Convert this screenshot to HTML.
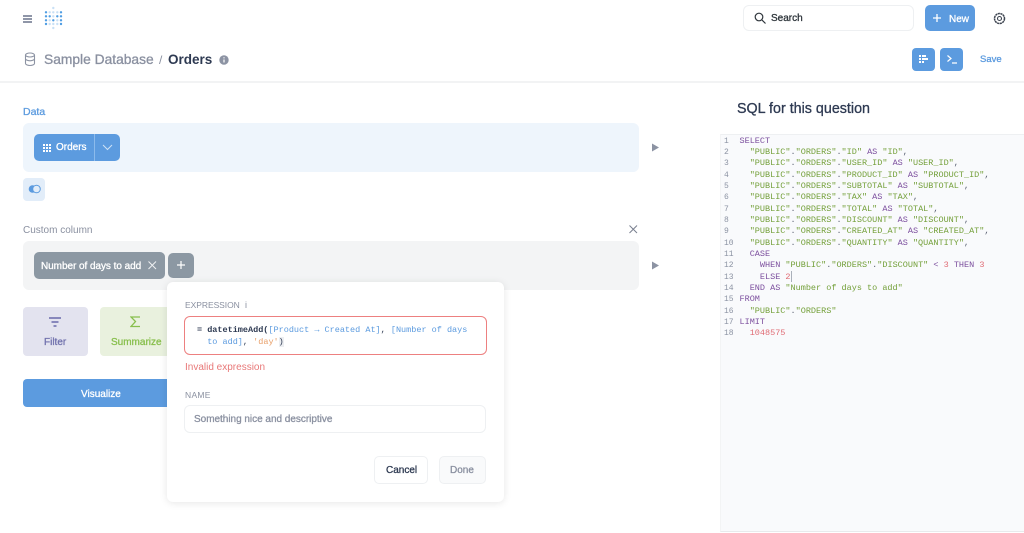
<!DOCTYPE html>
<html><head><meta charset="utf-8"><style>
html,body{margin:0;padding:0;background:#fff}
#p{position:relative;width:1024px;height:533px;overflow:hidden;background:#fff;font-family:"Liberation Sans",sans-serif;-webkit-text-stroke:.3px}
#p div,#p svg{position:absolute}
#p svg{-webkit-text-stroke:0}
.t{white-space:nowrap;line-height:14px;font-size:10px}
.l{-webkit-text-stroke:0}
.sql{font:8.5px/11.35px "Liberation Mono",monospace;white-space:pre;color:#74a03a;-webkit-text-stroke:0}
.k{color:#7c4f9e}.n{color:#e06c75}.o{color:#555c6e}
</style></head><body><div id="p">
<svg style="left:23px;top:15px" width="10" height="8"><path d="M0 1h9M0 4h9M0 7h9" stroke="#4c5773" stroke-width="1.2"/></svg>
<svg style="left:44px;top:5px" width="20" height="26"><g fill="#c9e0f5"><circle cx="9.300" cy="3" r="1.200"/><circle cx="5.700" cy="7.300" r="1.200"/><circle cx="9.300" cy="7.300" r="1.200"/><circle cx="13.300" cy="7.300" r="1.200"/><circle cx="9.300" cy="11.300" r="1.200"/><circle cx="5.700" cy="15.300" r="1.200"/><circle cx="13.300" cy="15.300" r="1.200"/><circle cx="5.700" cy="19" r="1.200"/><circle cx="9.300" cy="19" r="1.200"/><circle cx="13.300" cy="19" r="1.200"/><circle cx="9.300" cy="23" r="1.200"/></g><g fill="#509ee3"><circle cx="2" cy="7.300" r="1.200"/><circle cx="2" cy="11.300" r="1.200"/><circle cx="2" cy="15.300" r="1.200"/><circle cx="2" cy="19" r="1.200"/><circle cx="5.700" cy="11.300" r="1.200"/><circle cx="9.300" cy="15.300" r="1.200"/><circle cx="13.300" cy="11.300" r="1.200"/><circle cx="17" cy="7.300" r="1.200"/><circle cx="17" cy="11.300" r="1.200"/><circle cx="17" cy="15.300" r="1.200"/><circle cx="17" cy="19" r="1.200"/></g></svg>

<div style="left:743px;top:5px;width:169px;height:24px;border:1px solid #eef0f2;border-radius:6px"></div>
<svg style="left:754px;top:12px" width="13" height="13" fill="none" stroke="#2e353b" stroke-width="1.200"><circle cx="5" cy="5" r="3.800"/><path d="M8 8l3.500 3.500"/></svg>
<div class="t" style="left:771px;top:12px;color:#2e353b">Search</div>
<div style="left:925px;top:5px;width:50px;height:26px;background:#5c9bdf;border-radius:5px"></div>
<svg style="left:932px;top:13px" width="11" height="11"><path d="M5 1v8M1 5h8" stroke="#fff" stroke-width="1.300"/></svg>
<div class="t" style="left:949px;top:13px;color:#fff">New</div>
<svg style="left:993px;top:12px" width="13" height="13" fill="none" stroke="#3d4450" stroke-width="1.100"><circle cx="6.500" cy="6.500" r="2"/><circle cx="6.500" cy="6.500" r="5" stroke-width="1.500" stroke-dasharray="2.200 .5"/></svg>

<svg style="left:24px;top:52px" width="13" height="15" fill="none" stroke="#8c93a3" stroke-width="1.100"><ellipse cx="6" cy="3" rx="4.500" ry="2"/><path d="M1.500 3v8.500c0 1 2 2 4.500 2s4.500-1 4.500-2V3M1.500 6.800c0 1 2 2 4.500 2s4.500-1 4.500-2"/></svg>
<div class="t" style="left:44px;top:53px;font-size:13.800px;color:#8a90a0">Sample Database</div>
<div class="t l" style="left:159px;top:53px;font-size:12px;color:#8a90a0">/</div>
<div class="t l" style="left:168px;top:53px;font-size:13.500px;color:#2e3a52;font-weight:bold">Orders</div>
<svg style="left:219px;top:55px" width="10" height="10"><circle cx="5" cy="5" r="4.700" fill="#8c93a3"/><path d="M5 4.500v3M5 2.200v1.200" stroke="#fff" stroke-width="1.200"/></svg>

<div style="left:912px;top:48px;width:23px;height:23px;background:#5c9bdf;border-radius:4px"></div>
<svg style="left:919px;top:55px" width="10" height="9" fill="#fff"><rect x="0" y="0" width="2" height="2"/><rect x="3" y="0" width="4" height="2"/><rect x="0" y="3" width="2" height="2"/><rect x="3" y="3" width="6" height="2"/><rect x="0" y="6" width="2" height="2"/><rect x="3" y="6" width="2" height="2"/></svg>
<div style="left:940px;top:48px;width:23px;height:23px;background:#5c9bdf;border-radius:4px"></div>
<svg style="left:947px;top:55px" width="11" height="10" fill="none" stroke="#fff" stroke-width="1.200"><path d="M.5 .5l3.500 3-3.500 3M5 8h5"/></svg>
<div class="t" style="left:980px;top:53px;color:#5c9bdf;font-size:9.500px">Save</div>
<div style="left:0;top:81px;width:1024px;height:2px;background:#f2f3f4"></div>

<div class="t" style="left:23px;top:105px;font-size:10.500px;color:#5c9bdf">Data</div>
<div style="left:23px;top:123px;width:616px;height:49px;background:#eef5fc;border-radius:6px"></div>
<div style="left:34px;top:134px;width:86px;height:27px;background:#5c9bdf;border-radius:5px"></div>
<div style="left:94px;top:134px;width:1px;height:27px;background:#8cbbec"></div>
<svg style="left:43px;top:144px" width="8" height="8" fill="#fff"><rect x="0" y="0" width="2" height="2"/><rect x="3" y="0" width="2" height="2"/><rect x="6" y="0" width="2" height="2"/><rect x="0" y="3" width="2" height="2"/><rect x="3" y="3" width="2" height="2"/><rect x="6" y="3" width="2" height="2"/><rect x="0" y="6" width="2" height="2"/><rect x="3" y="6" width="2" height="2"/><rect x="6" y="6" width="2" height="2"/></svg>
<div class="t" style="left:56px;top:141px;color:#fff">Orders</div>
<svg style="left:102px;top:144px" width="11" height="7" fill="none" stroke="#cfe2f6" stroke-width="1"><path d="M1 1l4.500 4.500L10 1"/></svg>
<div style="left:23px;top:178px;width:22px;height:23px;background:#e2edf9;border-radius:4px"></div>
<svg style="left:28px;top:184px" width="13" height="10"><circle cx="4.500" cy="5" r="3.800" fill="#5c9bdf"/><circle cx="8.500" cy="5" r="3.800" fill="#e2edf9" stroke="#5c9bdf" stroke-width="1"/></svg>
<svg style="left:652px;top:143px" width="8" height="9"><path d="M0 .5l7 4-7 4z" fill="#8c93a3"/></svg>

<div class="t l" style="left:23px;top:224px;color:#8a90a0">Custom column</div>
<svg style="left:629px;top:225px" width="9" height="9" stroke="#7a8090" fill="none"><path d="M.5 .5l7.500 7.500M8 .5L.5 8"/></svg>
<div style="left:23px;top:241px;width:616px;height:49px;background:#f3f4f5;border-radius:6px"></div>
<div style="left:34px;top:252px;width:131px;height:27px;background:#8c98a3;border-radius:5px"></div>
<div class="t" style="left:41px;top:260px;color:#fff;letter-spacing:-.05px">Number of days to add</div>
<svg style="left:148px;top:261px" width="9" height="9" stroke="#eef0f2" fill="none"><path d="M.5 .5l7.500 7.500M8 .5L.5 8"/></svg>
<div style="left:168px;top:253px;width:26px;height:25px;background:#8c98a3;border-radius:5px"></div>
<svg style="left:176px;top:260px" width="11" height="11"><path d="M5 1v8M1 5h8" stroke="#fff" stroke-width="1.200"/></svg>
<svg style="left:652px;top:261px" width="8" height="9"><path d="M0 .5l7 4-7 4z" fill="#8c93a3"/></svg>

<div style="left:23px;top:307px;width:65px;height:49px;background:#e3e3ef;border-radius:4px"></div>
<svg style="left:48px;top:317px" width="14" height="11" stroke="#6a6bab" stroke-width="1.500"><path d="M1 1h12M3.500 5h7M5.500 9h3"/></svg>
<div class="t" style="left:44px;top:336px;color:#7172ad">Filter</div>
<div style="left:100px;top:307px;width:72px;height:49px;background:#e9f1de;border-radius:4px"></div>
<svg style="left:130px;top:316px" width="11" height="12" fill="none" stroke="#88bf4d" stroke-width="1.300"><path d="M10 1H1l4.500 4.500L1 10.500h9"/></svg>
<div class="t" style="left:111px;top:336px;color:#88bf4d">Summarize</div>
<div style="left:23px;top:379px;width:160px;height:28px;background:#5c9bdf;border-radius:4px"></div>
<div class="t" style="left:81px;top:388px;color:#fff">Visualize</div>

<div style="left:167px;top:282px;width:337px;height:220px;background:#fff;border-radius:6px;box-shadow:0 1px 8px rgba(0,0,0,.1)"></div>
<div class="t l" style="left:185px;top:298px;font-size:8.500px;color:#8a90a0;letter-spacing:-.05px">EXPRESSION</div>
<div class="t l" style="left:245px;top:298px;font-size:9px;color:#8a90a0">i</div>
<div style="left:184px;top:316px;width:301px;height:37px;border:1px solid #ed8080;border-radius:6px"></div>
<div class="sql" style="left:197px;top:324px;line-height:12px;color:#5c9bdf"><span style="color:#2e3a52;font-weight:bold">= datetimeAdd(</span>[Product → Created At]<span style="color:#2e3a52">,</span> [Number of days
  to add]<span style="color:#2e3a52">,</span> <span style="color:#e8a06a">'day'</span><span style="color:#2e3a52;background:#eceef1">)</span></div>
<div class="t l" style="left:185px;top:361px;color:#e87878">Invalid expression</div>
<div class="t l" style="left:185px;top:388px;font-size:8.500px;color:#8a90a0;letter-spacing:.3px">NAME</div>
<div style="left:184px;top:405px;width:300px;height:26px;border:1px solid #eef0f2;border-radius:6px"></div>
<div class="t" style="left:194px;top:413px;color:#8a90a0;letter-spacing:-.02px">Something nice and descriptive</div>
<div style="left:374px;top:456px;width:52px;height:26px;border:1px solid #eef0f2;border-radius:5px"></div>
<div class="t" style="left:386px;top:464px;color:#2e3a52">Cancel</div>
<div style="left:439px;top:456px;width:45px;height:26px;border:1px solid #eef0f2;border-radius:5px;background:#f9fafb"></div>
<div class="t" style="left:450px;top:464px;color:#8a90a0">Done</div>

<div class="t" style="left:737px;top:101px;font-size:14.300px;line-height:16px;color:#2e3a52;-webkit-text-stroke:.3px #2e3a52">SQL for this question</div>
<div style="left:720px;top:134px;width:304px;height:396px;background:#f9fafc;border-top:1px solid #eef0f2;border-left:1px solid #f3f4f5;border-bottom:1px solid #e8eaec"></div>
<div class="sql" style="left:724px;top:135.600px;color:#8c93a3;font-size:8px">1
2
3
4
5
6
7
8
9
10
11
12
13
14
15
16
17
18</div>
<div class="sql" style="left:739.500px;top:135.600px"><span class="k">SELECT</span>
  "PUBLIC"<span class="o">.</span>"ORDERS"<span class="o">.</span>"ID" <span class="k">AS</span> "ID"<span class="o">,</span>
  "PUBLIC"<span class="o">.</span>"ORDERS"<span class="o">.</span>"USER_ID" <span class="k">AS</span> "USER_ID"<span class="o">,</span>
  "PUBLIC"<span class="o">.</span>"ORDERS"<span class="o">.</span>"PRODUCT_ID" <span class="k">AS</span> "PRODUCT_ID"<span class="o">,</span>
  "PUBLIC"<span class="o">.</span>"ORDERS"<span class="o">.</span>"SUBTOTAL" <span class="k">AS</span> "SUBTOTAL"<span class="o">,</span>
  "PUBLIC"<span class="o">.</span>"ORDERS"<span class="o">.</span>"TAX" <span class="k">AS</span> "TAX"<span class="o">,</span>
  "PUBLIC"<span class="o">.</span>"ORDERS"<span class="o">.</span>"TOTAL" <span class="k">AS</span> "TOTAL"<span class="o">,</span>
  "PUBLIC"<span class="o">.</span>"ORDERS"<span class="o">.</span>"DISCOUNT" <span class="k">AS</span> "DISCOUNT"<span class="o">,</span>
  "PUBLIC"<span class="o">.</span>"ORDERS"<span class="o">.</span>"CREATED_AT" <span class="k">AS</span> "CREATED_AT"<span class="o">,</span>
  "PUBLIC"<span class="o">.</span>"ORDERS"<span class="o">.</span>"QUANTITY" <span class="k">AS</span> "QUANTITY"<span class="o">,</span>
  <span class="k">CASE</span>
    <span class="k">WHEN</span> "PUBLIC"<span class="o">.</span>"ORDERS"<span class="o">.</span>"DISCOUNT" <span class="k">&lt;</span> <span class="n">3</span> <span class="k">THEN</span> <span class="n">3</span>
    <span class="k">ELSE</span> <span class="n">2</span>
  <span class="k">END AS</span> "Number of days to add"
<span class="k">FROM</span>
  "PUBLIC"<span class="o">.</span>"ORDERS"
<span class="k">LIMIT</span>
  <span class="n">1048575</span></div>
<div style="left:791px;top:271px;width:1px;height:11px;background:#aab0ba"></div>
</div></body></html>
